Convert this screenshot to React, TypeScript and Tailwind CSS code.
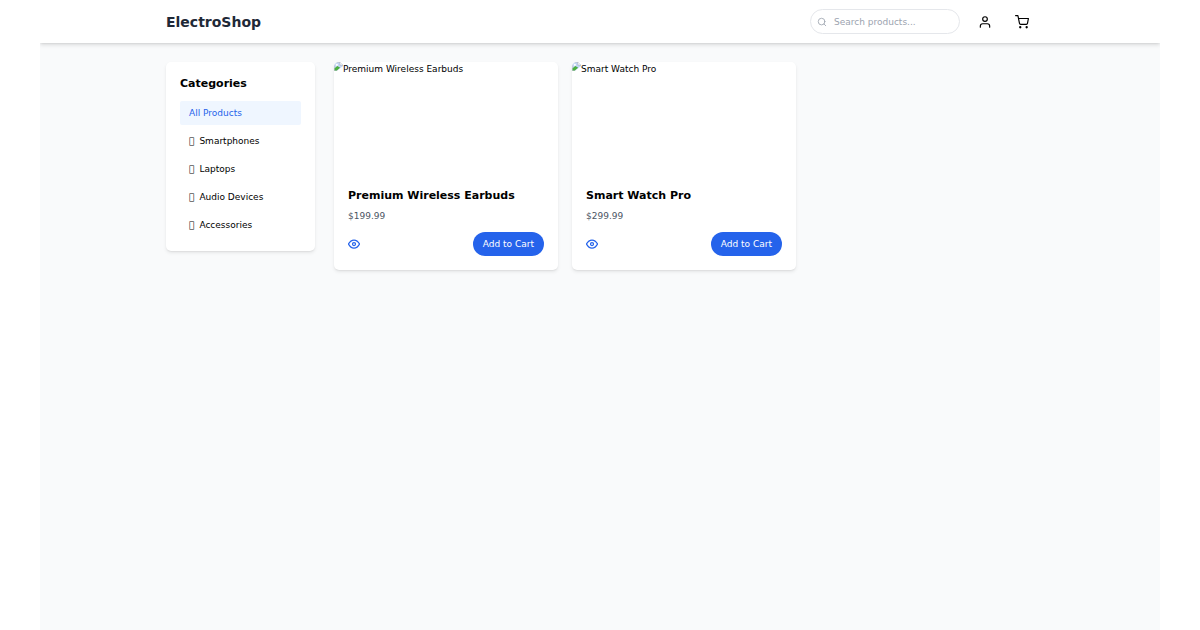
import { FiEye, FiSearch, FiShoppingCart, FiUser } from "react-icons/fi";

const categories = ["Smartphones", "Laptops", "Audio Devices", "Accessories"];

const products = [
  { name: "Premium Wireless Earbuds", price: "$199.99" },
  { name: "Smart Watch Pro", price: "$299.99" },
];

function MissingImage() {
  return (
    <svg aria-hidden="true" viewBox="0 0 16 16" className="size-[9px] shrink-0">
      <path d="M0.5 0.5h10l5 5v10h-15z" fill="#c3d5f5" stroke="#a5abb3" />
      <path d="M10.5 0.5v5h5" fill="#fff" stroke="#a5abb3" />
      <circle cx="5" cy="5" r="2" fill="#fff" />
      <path d="M1 15v-4l5-4 5 3-6 5z" fill="#4caf3f" />
      <path d="M5 16 16 7v9z" fill="#fff" />
    </svg>
  );
}

function Header() {
  return (
    <header className="relative bg-white shadow-[0_2px_4px_0px_rgba(0,0,0,0.12),0_1px_2px_-1px_rgba(0,0,0,0.12)]">
      <div className="mx-auto flex max-w-[896px] items-center justify-between px-3.5 py-[9px]">
        <h1 className="text-sm leading-5 font-bold text-[#1f2937]">ElectroShop</h1>
        <div className="flex items-center gap-[13px]">
          <div className="flex h-[25px] w-[150px] items-center gap-[7px] rounded-full border border-[#e5e7eb] px-1.5">
            <FiSearch aria-hidden="true" className="size-2.5 shrink-0 text-[#9ca3af]" />
            <input
              type="text"
              aria-label="Search products"
              placeholder="Search products..."
              className="h-full w-full min-w-0 bg-transparent text-[9px] outline-none placeholder:text-[#9ca3af]"
            />
          </div>
          <button type="button" aria-label="Account" className="p-[5px]">
            <FiUser className="size-3.5" />
          </button>
          <button type="button" aria-label="Cart" className="p-[5px]">
            <FiShoppingCart className="size-3.5" />
          </button>
        </div>
      </div>
    </header>
  );
}

function Sidebar() {
  return (
    <aside className="w-[149px] shrink-0 rounded-[5px] bg-white p-3.5 shadow-[0_2px_4px_-1px_rgba(0,0,0,0.12),0_1px_2px_-1px_rgba(0,0,0,0.12)]">
      <h2 className="mb-[9px] text-[11px] leading-4 font-bold">Categories</h2>
      <ul className="flex flex-col gap-1">
        <li>
          <button type="button" className="flex h-6 w-full items-center rounded-[2px] bg-[#eff6ff] px-[9px] text-[#2563eb]">
            All Products
          </button>
        </li>
        {categories.map((name) => (
          <li key={name}>
            <button type="button" className="flex h-6 w-full items-center gap-[5px] rounded-[2px] px-[9px]">
              <span aria-hidden="true">{"\uf3cd"}</span>
              {name}
            </button>
          </li>
        ))}
      </ul>
    </aside>
  );
}

export default function App() {
  return (
    <div className="min-h-screen bg-white px-10 font-['DejaVu_Sans',sans-serif] text-[9px] leading-[14px] text-black">
      <div className="min-h-screen overflow-hidden bg-[#f9fafb]">
        <Header />
        <main className="mx-auto flex max-w-[896px] items-start gap-[19px] px-3.5 py-[19px]">
          <Sidebar />
          <section aria-label="Products" className="grid flex-1 grid-cols-3 gap-3.5">
            {products.map(({ name, price }) => (
              <article
                key={name}
                className="overflow-hidden rounded-[5px] bg-white shadow-[0_2px_4px_-1px_rgba(0,0,0,0.12),0_1px_2px_-1px_rgba(0,0,0,0.12)]"
              >
                <div className="flex h-28 items-start">
                  <MissingImage />
                  <span>{name}</span>
                </div>
                <div className="p-3.5">
                  <h3 className="mb-[5px] text-[11px] leading-4 font-bold">{name}</h3>
                  <p className="mb-[9px] text-[#4b5563]">{price}</p>
                  <div className="flex items-center justify-between">
                    <button type="button" aria-label={`View ${name}`} className="text-[#2563eb]">
                      <FiEye strokeWidth={2.5} className="size-3" />
                    </button>
                    <button type="button" className="rounded-full bg-[#2563eb] px-2.5 py-[5px] text-white">
                      Add to Cart
                    </button>
                  </div>
                </div>
              </article>
            ))}
          </section>
        </main>
      </div>
    </div>
  );
}
